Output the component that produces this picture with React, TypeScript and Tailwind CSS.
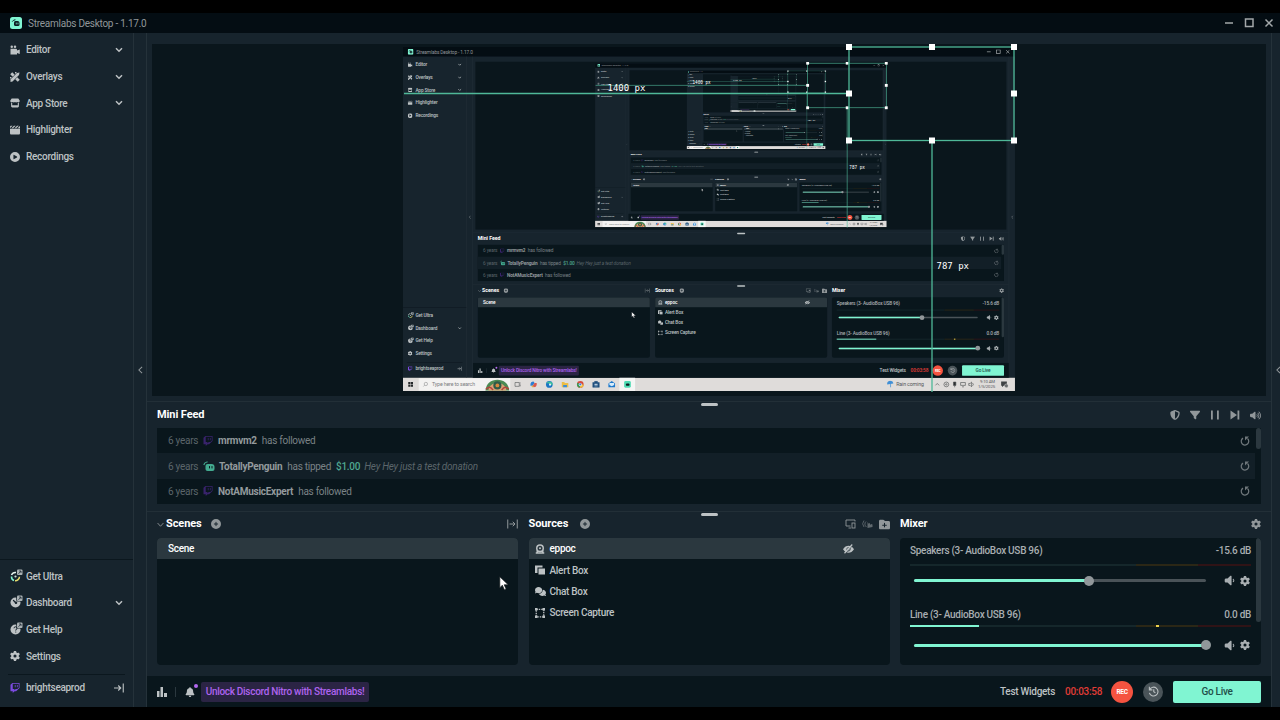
import type { ReactNode } from "react"
import {
  FaBell,
  FaCirclePlay,
  FaCirclePlus,
  FaClapperboard,
  FaComments,
  FaFilter,
  FaFolderPlus,
  FaGear,
  FaShieldHalved,
  FaStore,
  FaTwitch,
  FaVolumeHigh,
  FaVolumeLow,
} from "react-icons/fa6"

// how many times the captured screen shows itself inside the preview
const MAX_DEPTH = 5

// the capture lags a little behind, so every level has its own pointer and meter
const pointers = [
  { x: 499, y: 563 },
  { x: 479, y: 555 },
  { x: 468, y: 551 },
  { x: 460, y: 548 },
  { x: 455, y: 546 },
]
const lineLevels = [69, 83, 74, 60, 60]

const StreamlabsLogo = () => (
  <svg viewBox="0 0 24 24" className="size-3 shrink-0">
    <rect width="24" height="24" rx="5" fill="#80f5d2" />
    <path d="M5 8.500a6 6 0 0 1 5-3" stroke="#0b1a20" strokeWidth="2" fill="none" strokeLinecap="round" />
    <path d="M8 11a3 3 0 0 1 3-3h4a4 4 0 0 1 4 4v3a3 3 0 0 1-3 3h-5a3 3 0 0 1-3-3z" fill="#0b1a20" />
    <path d="M12.500 12v2M16 12v2" stroke="#80f5d2" strokeWidth="1.500" strokeLinecap="round" />
  </svg>
)

const Kevin = () => (
  <svg viewBox="0 0 24 24" className="size-3 shrink-0">
    <path d="M2 9a7 7 0 0 1 6-5" stroke="#43ab90" strokeWidth="2.500" fill="none" strokeLinecap="round" />
    <path d="M5 12a4 4 0 0 1 4-4h8a6 6 0 0 1 6 6v4a4 4 0 0 1-4 4H9a4 4 0 0 1-4-4z" fill="#43ab90" />
    <path d="M13 13v3M18 13v3" stroke="#0c181e" strokeWidth="2" strokeLinecap="round" />
  </svg>
)

const EditorIcon = () => (
  <svg viewBox="0 0 20 20" className="size-2.5" fill="currentColor">
    <circle cx="3.500" cy="3.500" r="2.500" />
    <circle cx="10" cy="3.500" r="2.500" />
    <path d="M1 7.500h11a2 2 0 0 1 2 2v1.500l5.500-2v9l-5.500-2v3H1z" />
  </svg>
)

const OverlaysIcon = () => (
  <svg viewBox="0 0 20 20" className="size-2.5" fill="currentColor">
    <path d="M1 15 14 2l5-1-1 5L5 19l-4 1z" />
    <path d="m.5 4.500 4-4 5 5-4 4zM10.500 14.500l4-4 5 5-4 4z" />
    <path d="M10 0h3v3h-3zM0 10h3v3H0z" />
  </svg>
)

const Chevron = () => (
  <svg viewBox="0 0 12 12" className="size-2" fill="none" stroke="currentColor" strokeWidth="2.200">
    <path d="m1.500 3.500 4.500 4.500 4.500-4.500" />
  </svg>
)

const SideArrow = () => (
  <svg viewBox="0 0 6 10" className="h-2 w-[5px] text-[#91979a]" fill="none" stroke="currentColor" strokeWidth="1.300">
    <path d="M5 1 1 5l4 4" />
  </svg>
)

const LinkBadge = ({ children }: { children: ReactNode }) => (
  <svg viewBox="0 0 26 26" className="mb-0.5 size-[13px] shrink-0">
    {children}
    <rect x="12.500" y="0" width="13" height="13" rx="3" fill="#17242d" />
    <rect x="14" y="1" width="11" height="11" rx="2" fill="#aab1b4" />
    <path d="M17 9.500 21.500 4.500M18 4h4v4" stroke="#17242d" strokeWidth="1.500" fill="none" />
  </svg>
)

const UltraIcon = () => (
  <LinkBadge>
    <path d="M3 12a8.500 8.500 0 0 1 9-5" stroke="#e8f5f0" strokeWidth="3" fill="none" />
    <path d="M3 15a8 8 0 0 0 5 8" stroke="#80f5d2" strokeWidth="3" fill="none" />
    <path d="M10 23.500a8.500 8.500 0 0 0 9-8" stroke="#e8dc6c" strokeWidth="3" fill="none" />
    <circle cx="11" cy="15" r="2.200" fill="#c9d8d4" />
  </LinkBadge>
)

const DashboardIcon = () => (
  <LinkBadge>
    <circle cx="11" cy="15" r="10" fill="#bdc2c4" />
    <path d="m7 11 4.500 4.500" stroke="#17242d" strokeWidth="2.500" fill="none" strokeLinecap="round" />
    <circle cx="12" cy="15.500" r="2.500" fill="#17242d" />
  </LinkBadge>
)

const HelpIcon = () => (
  <LinkBadge>
    <circle cx="11" cy="15" r="10" fill="#bdc2c4" />
    <path d="M8 12.500a3 3 0 1 1 3.500 3v1.500" stroke="#17242d" strokeWidth="2" fill="none" />
    <circle cx="11.500" cy="20" r="1.200" fill="#17242d" />
  </LinkBadge>
)

const LogoutIcon = () => (
  <svg viewBox="0 0 20 20" className="size-2.5" fill="none" stroke="currentColor" strokeWidth="2.200">
    <path d="M0 10h13M8.500 5l5 5-5 5M18.500 1v18" />
  </svg>
)

const CollapseIcon = () => (
  <svg viewBox="0 0 22 20" className="h-2.5 w-[11px]" fill="none" stroke="currentColor" strokeWidth="2">
    <path d="M1.500 1v18M20.500 1v18M5 10h11M11.500 5.500 16 10l-4.500 4.500" />
  </svg>
)

const ReplayIcon = () => (
  <svg viewBox="0 0 20 20" className="size-2.5" fill="none" stroke="currentColor" strokeWidth="2.500">
    <path d="M6 4.200a7.500 7.500 0 1 0 9 .8" />
    <path d="M10 1h8l-8 8z" fill="currentColor" stroke="none" />
  </svg>
)

const HiddenIcon = () => (
  <svg viewBox="0 0 22 20" className="mr-9 ml-auto h-2.5 w-[11px]">
    <path d="M0 10.500C3 5.500 7 3.500 11 3.500s8 2 11 7c-3 5-7 7-11 7s-8-2-11-7z" fill="#bdc2c4" />
    <circle cx="11" cy="10.500" r="3.500" fill="none" stroke="#2b383f" strokeWidth="1.500" />
    <path d="M4.500 19.500 20 2" stroke="#2b383f" strokeWidth="1.500" />
    <path d="M3 18.500 18.500 1" stroke="#bdc2c4" strokeWidth="2.500" />
  </svg>
)

const nav = [
  { label: "Editor", icon: <EditorIcon />, open: true },
  { label: "Overlays", icon: <OverlaysIcon />, open: true },
  { label: "App Store", icon: <FaStore className="size-2.5" />, open: true },
  { label: "Highlighter", icon: <FaClapperboard className="size-2.5" />, open: false },
  { label: "Recordings", icon: <FaCirclePlay className="size-2.5" />, open: false },
]

const bottomNav = [
  { label: "Get Ultra", icon: <UltraIcon />, open: false },
  { label: "Dashboard", icon: <DashboardIcon />, open: true },
  { label: "Get Help", icon: <HelpIcon />, open: false },
  { label: "Settings", icon: <FaGear className="size-2.5" />, open: false },
]

const NavItem = ({ item }: { item: (typeof nav)[number] }) => (
  <div className="flex h-[26.7px] items-center pr-2.5 pl-2.5">
    <span className="flex w-4 shrink-0">{item.icon}</span>
    <span className="flex-1">{item.label}</span>
    {item.open && <Chevron />}
  </div>
)

const Sidebar = () => (
  <div className="flex w-[134px] shrink-0 flex-col border-r border-[#25323a] text-[#bdc2c4]">
    <div className="flex-1 pt-[3.5px]">
      {nav.map((item) => (
        <NavItem key={item.label} item={item} />
      ))}
    </div>
    <div className="border-t border-[#0b171e] pt-[3px]">
      {bottomNav.map((item) => (
        <NavItem key={item.label} item={item} />
      ))}
    </div>
    <div className="mx-2 mt-1 mb-[6.5px] flex h-[27px] items-center border-t border-[#0b171e] pr-px pl-0.5">
      <FaTwitch className="mr-1.5 size-2.5 text-[#7c4be0]" />
      <span className="flex-1">brightseaprod</span>
      <LogoutIcon />
    </div>
  </div>
)

const TitleBar = () => (
  <div className="flex h-5 shrink-0 items-center bg-[#040d13] pr-2.5 pl-2.5 font-normal text-[#91979a]">
    <StreamlabsLogo />
    <span className="ml-1.5 flex-1 tracking-[-0.25px]">Streamlabs Desktop - 1.17.0</span>
    <svg viewBox="0 0 50 10" className="h-2.5 w-[50px]" fill="none" stroke="#a3a8aa" strokeWidth="1.500">
      <path d="M1 5h8" />
      <rect x="21.500" y="1" width="7.500" height="7.500" />
      <path d="m41.500 1.500 7 7M48.500 1.500l-7 7" />
    </svg>
  </div>
)

const handles = [
  [697, 3],
  [780, 3],
  [862, 3],
  [697, 49.5],
  [862, 49.5],
  [697, 96.5],
  [780, 96.5],
  [862, 96.5],
]

const Preview = ({ depth }: { depth: number }) => (
  <div className="relative mx-[5px] mt-[11px] h-[352px] shrink-0 overflow-hidden bg-[#0a161c]">
    {depth < MAX_DEPTH - 1 && (
      <div className="absolute top-[3.4px] left-[251px] origin-top-left scale-[0.4766]">
        <Screen depth={depth + 1} />
      </div>
    )}
    <svg viewBox="0 0 1114 352" className="absolute top-0 left-0 h-[352px] w-[1114px]">
      <g stroke="#4fb898" strokeWidth="1.300" fill="none">
        <rect x="697" y="3" width="165" height="93.500" />
        <path d="M252 49.500h445M780 96.500v251.500" />
      </g>
      {handles.map(([x, y]) => (
        <rect key={`${x}-${y}`} x={x - 3} y={y - 3} width="6" height="6" fill="#fff" />
      ))}
    </svg>
    <span className="absolute top-[38px] left-[455.5px] font-['DejaVu_Sans_Mono',monospace] text-[9px] leading-3 font-normal tracking-normal whitespace-pre text-white">
      1400 px
    </span>
    <span className="absolute top-[216px] left-[784.5px] font-['DejaVu_Sans_Mono',monospace] text-[9px] leading-3 font-normal tracking-normal whitespace-pre text-white">
      787 px
    </span>
  </div>
)

const DragHandle = () => <div className="mx-auto h-[3px] w-[17px] shrink-0 rounded-sm bg-[#bdc2c4]" />

const Heading = ({ children }: { children: string }) => (
  <h2 className="text-[11px] font-bold tracking-[-0.1px] text-white">{children}</h2>
)

const feed = [
  { name: "mrmvm2", action: "has followed" },
  { name: "TotallyPenguin", action: "has tipped", amount: "$1.00", message: "Hey Hey just a test donation" },
  { name: "NotAMusicExpert", action: "has followed" },
]

const MiniFeed = () => (
  <div className="h-[110px] shrink-0 border-t border-[#222f37] pt-px">
    <DragHandle />
    <div className="flex h-[22px] items-center justify-between px-2.5 pb-1">
      <Heading>Mini Feed</Heading>
      <div className="flex items-center gap-2.5 text-[#91979a]">
        <FaShieldHalved className="size-2.5" />
        <FaFilter className="size-2.5" />
        <svg viewBox="0 0 10 10" className="size-2.5" fill="currentColor">
          <path d="M1 0.500h1.800v9H1zM7 0.500h1.800v9H7z" />
        </svg>
        <svg viewBox="0 0 10 10" className="size-2.5" fill="currentColor">
          <path d="M.5.5v9l6.500-4.500zM7.500.5H9.300v9H7.500z" />
        </svg>
        <FaVolumeHigh className="size-[11px]" />
      </div>
    </div>
    <div className="mx-2.5 flex bg-[#09161c] font-normal tracking-[-0.27px]">
      <div className="flex-1">
        {feed.map((item) => (
          <div
            key={item.name}
            className={`flex h-[25.4px] items-center pr-[5px] pl-[11px] ${item.amount ? "bg-[#121f27]" : ""}`}
          >
            <span className="w-[35px] text-[#5b656a]">6 years</span>
            {item.amount ? (
              <span className="mr-1 flex">
                <Kevin />
              </span>
            ) : (
              <FaTwitch className="mr-[5px] size-2.5 text-[#38236b]" />
            )}
            <span className="font-bold text-[#939a9d]">{item.name}</span>
            <span className="ml-[5px] text-[#7a8286]">{item.action}</span>
            {item.amount && (
              <>
                <span className="ml-[5px] font-medium text-[#4fa890]">{item.amount}</span>
                <span className="ml-1 text-[#5b656a] italic">{item.message}</span>
              </>
            )}
            <span className="ml-auto text-[#6f777b]">
              <ReplayIcon />
            </span>
          </div>
        ))}
      </div>
      <div className="w-1.5">
        <div className="ml-px h-[21px] w-[5px] rounded-sm bg-[#2b383f]" />
      </div>
    </div>
  </div>
)

const Panel = ({ title, actions, children }: { title: ReactNode; actions: ReactNode; children: ReactNode }) => (
  <div className="flex w-[361px] flex-col">
    <div className="flex h-[26px] items-center pb-0.5 text-[#91979a]">
      {title}
      <div className="ml-auto flex items-center gap-1.5">{actions}</div>
    </div>
    <div className="h-[127px] overflow-hidden rounded-sm bg-[#09161c]">{children}</div>
  </div>
)

const sources = [
  {
    label: "eppoc",
    icon: (
      <svg viewBox="0 0 20 20" className="size-2.5" fill="none" stroke="currentColor" strokeWidth="3">
        <circle cx="10" cy="8.500" r="6.500" />
        <circle cx="10" cy="8.500" r="2" fill="currentColor" stroke="none" />
        <path d="M4.500 12.500v5M15.500 12.500v5M1.500 18h17" />
      </svg>
    ),
  },
  {
    label: "Alert Box",
    icon: (
      <svg viewBox="0 0 20 20" className="size-2.5" fill="currentColor">
        <path d="M0 1h15v4H5v11H0zM7 7h13v12H7z" />
      </svg>
    ),
  },
  { label: "Chat Box", icon: <FaComments className="size-[11px]" /> },
  {
    label: "Screen Capture",
    icon: (
      <svg viewBox="0 0 20 20" className="size-2.5" fill="none" stroke="currentColor">
        <rect x="2.500" y="2.500" width="15" height="15" strokeWidth="2.500" strokeDasharray="3 2" />
        <path d="M0 2.500h5M15 2.500h5M0 17.500h5M15 17.500h5" strokeWidth="5" />
      </svg>
    ),
  },
]

type Channel = { name: string; db: string; volume: number; level: number; peak?: boolean }

const MixerItem = ({ channel }: { channel: Channel }) => (
  <div className="h-[64.300px] pr-[5px] pl-2.5 text-[#a8aeb1]">
    <div className={`flex h-[22px] justify-between ${channel.peak ? "items-center pb-px" : "items-center pb-0.5"}`}>
      <span>{channel.name}</span>
      <span>{channel.db}</span>
    </div>
    <div className={`relative flex h-0.5 ${channel.peak ? "-mt-px" : "mt-0.5"}`}>
      <div className="w-[226px] bg-[#15272b]" />
      <div className="w-[62px] bg-[#2b2716]" />
      <div className="flex-1 bg-[#2f1316]" />
      <div className="absolute top-0 left-0 h-0.5 bg-[#80f5d2]" style={{ width: channel.level }} />
      {channel.peak && <div className="absolute top-0 left-[246px] h-0.5 w-[3px] bg-[#ecd04c]" />}
    </div>
    <div className={`flex items-center pl-1 ${channel.peak ? "mt-[12.5px]" : "mt-[9px]"}`}>
      <div className="relative h-[3px] w-[292px] rounded-full bg-[#4a5358]">
        <div className="h-[3px] rounded-full bg-[#80f5d2]" style={{ width: `${channel.volume}%` }} />
        <div
          className="absolute -top-[3.5px] -ml-[5px] size-2.5 rounded-full bg-[#91979a]"
          style={{ left: `${channel.volume}%` }}
        />
      </div>
      <FaVolumeLow className="ml-[18px] size-[11px] shrink-0" />
      <FaGear className="ml-[5px] size-2.5 shrink-0" />
    </div>
  </div>
)

const Panels = ({ depth }: { depth: number }) => (
  <div className="h-[165px] shrink-0 border-t border-[#222f37] pt-px">
    <DragHandle />
    <div className="-mt-1 flex justify-between px-2.5">
      <Panel
        title={
          <>
            <svg viewBox="0 0 12 12" className="mr-0.5 size-[7px]" fill="none" stroke="currentColor" strokeWidth="1.500">
              <path d="m1 3.500 5 5.500 5-5.500" />
            </svg>
            <Heading>Scenes</Heading>
            <FaCirclePlus className="ml-[9px] size-2.5" />
          </>
        }
        actions={<CollapseIcon />}
      >
        <div className="flex h-[21.400px] items-center bg-[#2b383f] pl-[11px] text-white">Scene</div>
      </Panel>
      <Panel
        title={
          <>
            <Heading>Sources</Heading>
            <FaCirclePlus className="ml-3 size-2.5" />
          </>
        }
        actions={
          <>
            <svg viewBox="0 0 22 20" className="h-2.5 w-[11px]" fill="none" stroke="currentColor" strokeWidth="1.800">
              <path d="M20 5V2H2v12h9M7 18h5" />
              <rect x="14" y="8" width="6" height="10" />
            </svg>
            <svg viewBox="0 0 22 20" className="h-2.5 w-[11px]" fill="none" stroke="#60696e" strokeWidth="1.800">
              <path d="M4 3a10 10 0 0 0 0 13M8 5a7 7 0 0 0 1 11" />
              <path d="M11 6v12l10-2v-5l-3-1-2 2V9l-2-1v2z" fill="#60696e" stroke="none" />
            </svg>
            <FaFolderPlus className="size-[11px]" />
          </>
        }
      >
        {sources.map((source, index) => (
          <div
            key={source.label}
            className={`flex h-[21.400px] items-center pl-1.5 ${index === 0 ? "bg-[#2b383f] text-white" : "text-[#bdc2c4]"}`}
          >
            <span className="flex w-[15px] text-[#bdc2c4]">{source.icon}</span>
            <span>{source.label}</span>
            {index === 0 && <HiddenIcon />}
          </div>
        ))}
      </Panel>
      <Panel title={<Heading>Mixer</Heading>} actions={<FaGear className="size-2.5" />}>
        <div className="flex">
          <div className="flex-1 pt-0.5">
            <MixerItem channel={{ name: "Speakers (3- AudioBox USB 96)", db: "-15.6 dB", volume: 60, level: 0 }} />
            <MixerItem
              channel={{ name: "Line (3- AudioBox USB 96)", db: "0.0 dB", volume: 100, level: lineLevels[depth], peak: true }}
            />
          </div>
          <div className="h-[84px] w-[5px] rounded-sm bg-[#2b383f]" />
        </div>
      </Panel>
    </div>
  </div>
)

const Footer = () => (
  <div className="flex flex-1 items-center bg-[#09161c] pr-2.5 pl-2.5 text-[#bdc2c4]">
    <svg viewBox="0 0 20 20" className="size-2.5" fill="currentColor">
      <path d="M0 8h5v12H0zM7 0h5v20H7zM14 12h6v8h-6z" />
    </svg>
    <div className="ml-2 h-2.5 w-px bg-[#2b383f]" />
    <div className="relative ml-[9px]">
      <FaBell className="size-2.5" />
      <div className="absolute -top-[3px] -right-[3px] size-1 rounded-full bg-[#b368ee]" />
    </div>
    <div className="ml-1.5 flex h-5 w-[168px] items-center justify-center rounded-xs bg-[#2b2444] whitespace-nowrap text-[#ae63ee]">
      Unlock Discord Nitro with Streamlabs!
    </div>
    <span className="ml-auto">Test Widgets</span>
    <span className="ml-2.5 w-[37px] text-[#e03c36]">00:03:58</span>
    <div className="ml-[9px] flex size-[22px] items-center justify-center rounded-full bg-[#f55340] pt-px text-[6.5px] leading-none font-bold text-white">
      REC
    </div>
    <div className="ml-2.5 flex size-5 items-center justify-center rounded-full bg-[#4a5459]">
      <svg viewBox="0 0 20 20" className="size-[11px]" fill="none" stroke="currentColor" strokeWidth="2">
        <path d="M3 6.500a8 8 0 1 1-.5 6M2.500 1.500v5.500H8M10.500 6v4.500l3 2" />
      </svg>
    </div>
    <div className="ml-2.5 flex h-[22px] w-[88px] items-center justify-center rounded-xs bg-[#80f5d2] text-[#1f4f49]">
      Go Live
    </div>
  </div>
)

const TaskIcon = ({ children }: { children: ReactNode }) => (
  <span className="flex h-full w-[32.800px] shrink-0 items-center justify-center">
    <svg viewBox="0 0 16 16" className="size-4">
      {children}
    </svg>
  </span>
)

const Taskbar = () => (
  <div className="flex h-7 items-center bg-[#dfdcda] font-normal text-[#55585a]">
    <TaskIcon>
      <path d="M3 3h4.500v4.500H3zM8.500 3H13v4.500H8.500zM3 8.500h4.500V13H3zM8.500 8.500H13V13H8.500z" fill="#25282a" />
    </TaskIcon>
    <div className="flex h-[26px] w-[192px] shrink-0 items-center bg-[#f3f2f1] text-[11px] text-[#7a7d7f]">
      <svg viewBox="0 0 12 12" className="mx-2 size-3" fill="none" stroke="#7a7d7f">
        <circle cx="7" cy="5" r="3.500" />
        <path d="m1.500 10.500 3-3" />
      </svg>
      <span className="flex-1 whitespace-nowrap">Type here to search</span>
      <svg viewBox="0 0 54 25" className="h-[25px] w-[54px]">
        <path d="M2 25C3 10 14 2 27 2s24 8 25 23z" fill="#4c8b54" />
        <path d="M8 25c1-9 8-16 19-16s18 7 19 16z" fill="#d9a274" />
        <circle cx="27" cy="14" r="8.500" fill="#2f5b49" />
        <circle cx="27" cy="14" r="4" fill="#d78a3c" />
        <path d="M3 22c6-6 10-6 15 2M51 22c-6-6-10-6-15 2" stroke="#b2443d" strokeWidth="3" fill="none" />
      </svg>
    </div>
    <TaskIcon>
      <path d="M2 4h9v8H2zM13 4v2M13 8v4" stroke="#55585a" fill="none" strokeWidth="1.300" />
    </TaskIcon>
    <TaskIcon>
      <path d="M1 10C2 4 3 2 8 2l2 3-4 6H3z" fill="#2b7fd4" />
      <path d="M15 6c-1 6-2 8-7 8l-2-3 4-6h3z" fill="#d8584f" />
      <path d="M3 11h5l-1 3H5z" fill="#e9b43c" />
    </TaskIcon>
    <TaskIcon>
      <circle cx="8" cy="8" r="7" fill="#1b76c4" />
      <path d="M2 6c2-5 11-6 13 1 0 3-5 3-6 1-1-3-5-3-7-2" fill="#3dbf9c" />
      <circle cx="9.500" cy="8.500" r="2.200" fill="#e4f1f8" />
    </TaskIcon>
    <TaskIcon>
      <path d="M1 3h5l2 2h7v9H1z" fill="#edbd45" />
      <path d="M4 9h8v5H4z" fill="#3f8fd6" />
    </TaskIcon>
    <TaskIcon>
      <circle cx="8" cy="8" r="7" fill="#d94b3d" />
      <path d="M8 8 2 4.500A7 7 0 0 0 7 15z" fill="#389a55" />
      <path d="M8 8h7a7 7 0 0 1-8 7z" fill="#ecc13c" />
      <circle cx="8" cy="8" r="3.200" fill="#fff" />
      <circle cx="8" cy="8" r="2.300" fill="#3f7fe0" />
    </TaskIcon>
    <TaskIcon>
      <path d="M1 4h14v10H1zM5 4V1.500h6V4" fill="#1f4f7d" stroke="#1f4f7d" />
      <path d="M5 6.500h2.500V9H5zM8.500 6.500H11V9H8.500zM5 10h2.500v2H5zM8.500 10H11v2H8.500z" fill="#e3f0fa" />
    </TaskIcon>
    <TaskIcon>
      <path d="M1 6l7-5 7 5v8H1z" fill="#1b78cc" />
      <path d="M3 5h10v4l-5 3-5-3z" fill="#d6ecfb" />
    </TaskIcon>
    <div className="flex h-full bg-[#f4f5f4]">
      <TaskIcon>
        <rect x="1" y="1" width="14" height="14" rx="3" fill="#4ddbb2" />
        <rect x="5" y="6" width="7" height="5" rx="1.500" fill="#0b1a20" />
      </TaskIcon>
    </div>
    <div className="ml-auto flex items-center text-[11px] whitespace-nowrap">
      <svg viewBox="0 0 16 16" className="mr-1 size-4" fill="none">
        <path d="M1 8a6 6 0 0 1 13-2z" fill="#3f8fd6" />
        <path d="M8 7v7" stroke="#3f8fd6" strokeWidth="1.500" />
      </svg>
      <span className="mr-3.5">Rain coming</span>
      <svg viewBox="0 0 84 16" className="ml-2 h-4 w-[84px]" fill="none" stroke="#4d5052" strokeWidth="1.300">
        <path d="m2 10 4-4 4 4" />
        <circle cx="25" cy="8" r="5" />
        <circle cx="25" cy="8" r="1.500" />
        <path d="M40 3h5v7h-5zM42.500 10v4" fill="#2c2f31" />
        <path d="M55 4h10v6H55zM58 13h4" />
        <path d="M72 6h3l3-3v10l-3-3h-3zM80 5a4 4 0 0 1 0 6" />
      </svg>
      <div className="mr-3 ml-2 text-right text-[9px] leading-[11px]">
        <p>9:10 AM</p>
        <p>1/5/2025</p>
      </div>
      <svg viewBox="0 0 16 16" className="mr-3.5 size-4">
        <path d="M1 2h12v9H6l-3 3v-3H1z" fill="#3f4244" />
        <circle cx="12" cy="11" r="4" fill="#6a6d6f" stroke="#dfdcda" />
      </svg>
    </div>
  </div>
)

function Screen({ depth }: { depth: number }) {
  const pointer = pointers[depth]
  return (
    <div className="relative w-[1284px] overflow-hidden">
      <div className="flex h-[694px] flex-col bg-[#17242d]">
        <TitleBar />
        <div className="flex min-h-0 flex-1">
          <Sidebar />
          <div className="flex w-3 shrink-0 items-center justify-center">
            <SideArrow />
          </div>
          <div className="flex w-[1126px] shrink-0 flex-col border-x border-[#25323a]">
            <Preview depth={depth} />
            <div className="h-[5px] shrink-0" />
            <MiniFeed />
            <Panels depth={depth} />
            <Footer />
          </div>
          <div className="flex flex-1 items-center justify-center">
            <SideArrow />
          </div>
        </div>
      </div>
      {/* the outermost screen ends above its taskbar */}
      {depth > 0 && <Taskbar />}
      <svg
        viewBox="0 0 12 18"
        className="absolute h-[15px] w-2.5"
        style={{ left: pointer.x, top: pointer.y }}
        fill="#fff"
        stroke="#1b1f22"
        strokeWidth=".8"
      >
        <path d="M1 1v13l3-3 2.500 5.500 2-1L6.200 10.500H11z" />
      </svg>
    </div>
  )
}

export default function App() {
  return (
    <div className="h-[720px] w-[1280px] overflow-hidden bg-black pt-[13px] font-[Roboto,'Liberation_Sans',sans-serif] text-[10px] font-medium tracking-[-0.29px]">
      <Screen depth={0} />
    </div>
  )
}
